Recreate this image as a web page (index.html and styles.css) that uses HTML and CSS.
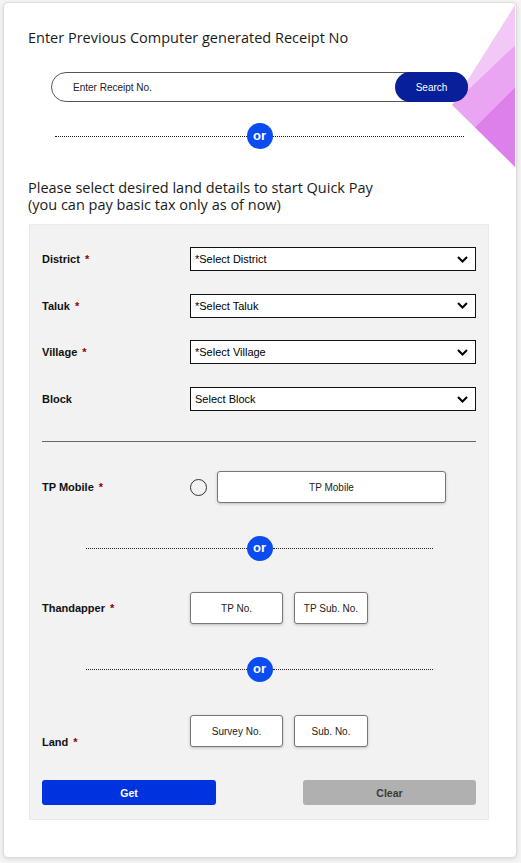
FILE: index.html
```html
<!DOCTYPE html>
<html lang="en">
<head>
<meta charset="utf-8">
<title>Quick Pay</title>
<link rel="stylesheet" href="styles.css">
</head>
<body>
<div class="page">
  <div class="card">
    <svg class="deco" width="64" height="163" viewBox="0 0 64 163" aria-hidden="true">
      <polygon points="63,0 0,100 63,40" fill="#f2c8f6"/>
      <polygon points="63,40 0,100 22.7,122.3 63,82" fill="#e9a5f1"/>
      <polygon points="63,82 22.7,122.3 63,162" fill="#dd80ec"/>
    </svg>

    <h2 class="title">Enter Previous Computer generated Receipt No</h2>

    <div class="search">
      <span class="search-input">Enter Receipt No.</span>
      <span class="search-btn">Search</span>
    </div>

    <div class="or-row or-wide"><span class="or">or</span></div>

    <h2 class="subtitle">Please select desired land details to start Quick Pay<br>(you can pay basic tax only as of now)</h2>

    <div class="panel">
      <div class="field-row">
        <span class="label">District <span class="req">*</span></span>
        <div class="select"><span>*Select District</span><svg class="chev" width="11" height="7" viewBox="0 0 11 7"><path d="M1 1 L5.5 5.5 L10 1" fill="none" stroke="#000" stroke-width="2"/></svg></div>
      </div>
      <div class="field-row">
        <span class="label">Taluk <span class="req">*</span></span>
        <div class="select"><span>*Select Taluk</span><svg class="chev" width="11" height="7" viewBox="0 0 11 7"><path d="M1 1 L5.5 5.5 L10 1" fill="none" stroke="#000" stroke-width="2"/></svg></div>
      </div>
      <div class="field-row">
        <span class="label">Village <span class="req">*</span></span>
        <div class="select"><span>*Select Village</span><svg class="chev" width="11" height="7" viewBox="0 0 11 7"><path d="M1 1 L5.5 5.5 L10 1" fill="none" stroke="#000" stroke-width="2"/></svg></div>
      </div>
      <div class="field-row last">
        <span class="label">Block</span>
        <div class="select"><span>Select Block</span><svg class="chev" width="11" height="7" viewBox="0 0 11 7"><path d="M1 1 L5.5 5.5 L10 1" fill="none" stroke="#000" stroke-width="2"/></svg></div>
      </div>

      <div class="rule"></div>

      <div class="box-row mobile-row">
        <span class="label">TP Mobile <span class="req">*</span></span>
        <span class="radio"></span>
        <span class="box box-mobile">TP Mobile</span>
      </div>

      <div class="or-row or-narrow"><span class="or">or</span></div>

      <div class="box-row">
        <span class="label">Thandapper <span class="req">*</span></span>
        <span class="box box-a">TP No.</span>
        <span class="box box-b">TP Sub. No.</span>
      </div>

      <div class="or-row or-narrow"><span class="or">or</span></div>

      <div class="box-row land-row">
        <span class="label">Land <span class="req">*</span></span>
        <span class="box box-a">Survey No.</span>
        <span class="box box-b">Sub. No.</span>
      </div>

      <div class="actions">
        <span class="btn btn-get">Get</span>
        <span class="btn btn-clear">Clear</span>
      </div>
    </div>
  </div>
</div>
</body>
</html>
```

FILE: styles.css
```css
* { box-sizing: border-box; }

body {
  margin: 0;
  background: #f4f4f4;
  font-family: "Liberation Sans", Arial, sans-serif;
  color: #111;
}

.page {
  padding: 2px 4px 4px 3px;
}

.card {
  position: relative;
  background: #fff;
  border: 1px solid #dcdcdc;
  border-radius: 5px;
  box-shadow: 0 1px 4px rgba(0, 0, 0, 0.12);
  padding: 26px 26px 37px 24px;
  overflow: hidden;
}

.deco {
  position: absolute;
  top: 2px;
  right: 0;
}

.title,
.subtitle {
  position: relative;
  margin: 0;
  font-family: "Open Sans", "Noto Sans", sans-serif;
  font-weight: 500;
  font-size: 14.5px;
  color: #1a1a1a;
}

.title {
  line-height: 18px;
}

.subtitle {
  line-height: 17px;
  margin-top: 30px;
}

.search {
  position: relative;
  display: flex;
  align-items: stretch;
  height: 30px;
  width: 417px;
  margin: 25px 0 0 23px;
  border: 1px solid #555;
  border-radius: 15px;
  background: #fff;
}

.search-input {
  flex: 1;
  display: flex;
  align-items: center;
  padding-left: 21px;
  font-size: 10px;
  color: #222;
}

.search-btn {
  display: flex;
  align-items: center;
  justify-content: center;
  width: 73px;
  margin: -1px -1px -1px 0;
  border-radius: 15px;
  background: #081f9b;
  color: #fff;
  font-size: 10px;
}

.or-row {
  display: flex;
  align-items: center;
}

.or-row::before,
.or-row::after {
  content: "";
  flex: 1;
  border-top: 1px dotted #222;
}

.or-wide {
  width: 409px;
  margin: 21px 0 0 27px;
}

.or-narrow {
  width: 347px;
  margin: 33px 0 0 44px;
}

.or {
  width: 26px;
  height: 26px;
  border-radius: 50%;
  background: #0a4cf0;
  color: #fff;
  font-weight: bold;
  font-size: 13px;
  display: flex;
  align-items: center;
  justify-content: center;
  padding-bottom: 2px;
}

.or-narrow .or {
  height: 25px;
}

.panel {
  margin: 11px 1px 0 1px;
  background: #f2f2f2;
  border: 1px solid #ebebeb;
  padding: 22px 12px 14px 12px;
}

.field-row {
  display: flex;
  align-items: center;
  height: 24px;
  margin-bottom: 22.7px;
}

.field-row.last {
  margin-bottom: 0;
}

.label {
  width: 148px;
  flex: none;
  font-weight: bold;
  font-size: 11px;
  color: #111;
}

.req {
  color: #8b0000;
  margin-left: 2px;
}

.select {
  flex: 1;
  height: 24px;
  display: flex;
  align-items: center;
  justify-content: space-between;
  border: 1px solid #111;
  background: #fff;
  padding: 0 7px 0 4px;
  font-size: 11px;
  color: #000;
}

.chev {
  display: block;
}

.rule {
  margin-top: 30px;
  border-top: 1px solid #666;
}

.box-row {
  display: flex;
  align-items: center;
  margin-top: 31px;
}

.mobile-row {
  margin-top: 29px;
}

.land-row {
  margin-top: 33px;
  align-items: flex-end;
}

.land-row .label {
  line-height: 10px;
}

.radio {
  width: 17px;
  height: 17px;
  border: 1px solid #333;
  border-radius: 50%;
  margin-right: 10px;
  flex: none;
}

.box {
  height: 32px;
  display: flex;
  align-items: center;
  justify-content: center;
  background: #fff;
  border: 1px solid #777;
  border-radius: 3px;
  box-shadow: 0 1px 3px rgba(0, 0, 0, 0.22);
  font-size: 10px;
  color: #222;
  flex: none;
}

.box-mobile {
  width: 229px;
}

.box-a {
  width: 93px;
  margin-right: 11px;
}

.box-b {
  width: 74px;
}

.actions {
  display: flex;
  justify-content: space-between;
  margin-top: 33px;
}

.btn {
  height: 25px;
  display: flex;
  align-items: center;
  justify-content: center;
  border-radius: 3px;
  font-weight: bold;
  font-size: 10.5px;
}

.btn-get {
  width: 174px;
  background: #0033e0;
  color: #fff;
}

.btn-clear {
  width: 173px;
  background: #b0b0b0;
  color: #3a3a3a;
}
```
